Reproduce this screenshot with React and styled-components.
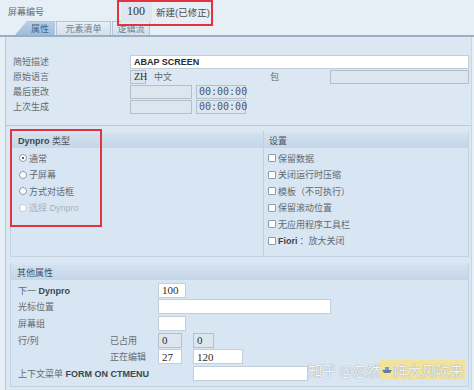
import React from 'react';
import styled, { createGlobalStyle, css } from 'styled-components';

const Global = createGlobalStyle`
  html, body { margin: 0; padding: 0; background: #e6eef6; }
  body { font-family: "Liberation Sans", "Noto Sans CJK SC", sans-serif; }
`;

const Screen = styled.div`
  position: relative;
  width: 474px;
  height: 390px;
  overflow: hidden;
  background: #e6eef6;
  font-size: 9px;
  color: #646a71;
`;

const TopBar = styled.div`
  display: flex;
  align-items: center;
  height: 20px;
  padding: 3px 0 0 8px;
  box-sizing: border-box;
`;

const TopLabel = styled.span`
  width: 113px;
`;

const Annotated = styled.div`
  position: relative;
  display: flex;
  align-items: center;
  gap: 4px;
  height: 20px;
`;

const RedFrame = styled.div`
  position: absolute;
  border: 2px solid #e0353d;
  pointer-events: none;
  ${({ $inset }) => css`inset: ${$inset};`}
`;

const NumberField = styled.div`
  width: 31px;
  height: 20px;
  display: flex;
  align-items: center;
  padding-left: 6px;
  box-sizing: border-box;
  background: #dfe6ee;
  font-family: "Liberation Serif", "Noto Sans CJK SC", serif;
  font-size: 12px;
  color: #333;
`;

const Status = styled.span`
  font-size: 9.5px;
  color: #4c4c4c;
`;

const TabStrip = styled.div`
  display: flex;
  align-items: flex-end;
  height: 15px;
  padding-left: 15px;
  border-bottom: 2px solid #98afc6;
`;

const Tab = styled.div`
  height: 14px;
  display: flex;
  align-items: center;
  justify-content: center;
  box-sizing: border-box;
  width: ${({ $w }) => $w}px;
  margin-right: 1px;
  color: ${({ $active }) => ($active ? '#46668a' : '#6b7d90')};
  background: ${({ $active }) => ($active ? 'linear-gradient(#b8cfe6, #9fbcdb)' : 'linear-gradient(#e6eef6, #d3e0ec)')};
  border: 1px solid #b4c5d6;
  border-bottom: none;
  ${({ $first }) => $first && css`
    clip-path: polygon(12px 0, 100% 0, 100% 100%, 0 100%);
    padding-left: 10px;
  `}
`;

const Body = styled.div`
  margin-left: 5px;
  margin-right: 2px;
  height: 353px;
  background: #dbe7f3;
  border-left: 1px solid #b7c7d7;
  border-right: 1px solid #c9d6e3;
  display: flex;
  flex-direction: column;
`;

const TopGroup = styled.div`
  height: 89px;
  box-sizing: border-box;
  padding: 17px 2px 0 7px;
  border-bottom: 1px solid #b9c9da;
`;

const Row = styled.div`
  display: flex;
  align-items: center;
  height: ${({ $h }) => $h || 15}px;
`;

const Label = styled.span`
  flex: none;
  width: ${({ $w }) => $w}px;
  white-space: nowrap;
  color: ${({ $muted }) => ($muted ? '#a9b3bd' : '#646a71')};
`;

const Latin = styled.span`
  font-weight: bold;
  color: #3d4650;
`;

const Field = styled.div`
  flex: ${({ $grow }) => ($grow ? '1' : 'none')};
  width: ${({ $w }) => ($w ? `${$w}px` : 'auto')};
  height: ${({ $h }) => $h || 14}px;
  margin-left: ${({ $ml }) => $ml || 0}px;
  box-sizing: border-box;
  display: flex;
  align-items: center;
  padding-left: 3px;
  background: ${({ $off }) => ($off ? '#dde6ef' : '#ffffff')};
  border: 1px solid ${({ $off }) => ($off ? '#b2bfcc' : '#c3ced9')};
  font-family: ${({ $serif }) => ($serif ? '"Liberation Serif", serif' : '"Liberation Sans", sans-serif')};
  font-size: ${({ $fs }) => $fs || 9}px;
  color: #2d2d2d;
  font-weight: ${({ $bold }) => ($bold ? 'bold' : 'normal')};
`;

const Time = styled(Field)`
  font-family: "DejaVu Sans Mono", "Liberation Mono", monospace;
  font-size: 10px;
  color: #4a5866;
  padding-left: 2px;
`;

const Plain = styled.span`
  margin-left: ${({ $ml }) => $ml || 0}px;
  width: ${({ $w }) => ($w ? `${$w}px` : 'auto')};
  flex: none;
`;

const Group = styled.div`
  margin: ${({ $mt }) => $mt}px 2px 0 4px;
  height: ${({ $h }) => $h}px;
  box-sizing: border-box;
  border: 1px solid #c3d2e1;
  border-top: none;
  background: #d8e5f2;
  display: flex;
  flex-direction: column;
`;

const Columns = styled.div`
  display: grid;
  grid-template-columns: 252px 1fr;
  flex: 1;
`;

const Column = styled.div`
  display: flex;
  flex-direction: column;
  border-left: ${({ $divider }) => ($divider ? '1px solid #c1d0df' : 'none')};
`;

const GroupHeader = styled.div`
  height: 15px;
  margin-top: 2px;
  display: flex;
  align-items: center;
  padding-left: ${({ $pl }) => $pl || 7}px;
  background: linear-gradient(#d3e1ef, #c4d6e9);
  color: #4b5360;
`;

const OptionList = styled.div`
  position: relative;
  display: flex;
  flex-direction: column;
  padding: 2px 0 0 ${({ $pl }) => $pl}px;
`;

const Option = styled.div`
  display: flex;
  align-items: center;
  gap: 2px;
  height: 16.5px;
  color: ${({ $disabled }) => ($disabled ? '#aab4be' : '#646a71')};
`;

const Radio = styled.span`
  position: relative;
  width: 8px;
  height: 8px;
  border-radius: 50%;
  background: #fff;
  border: 1px solid ${({ $disabled }) => ($disabled ? '#c6cfd8' : '#8d9aa7')};
  box-sizing: border-box;
  &::after {
    content: '';
    position: absolute;
    left: 2px;
    top: 2px;
    width: 2px;
    height: 2px;
    border-radius: 50%;
    background: ${({ $on }) => ($on ? '#2a2a2a' : 'transparent')};
  }
`;

const Check = styled.span`
  width: 8px;
  height: 8px;
  box-sizing: border-box;
  background: #fff;
  border: 1px solid #8e9aa6;
  border-radius: 1px;
`;

const OtherRows = styled.div`
  display: flex;
  flex-direction: column;
  padding: 2px 0 0 7px;
`;

const Watermark = styled.div`
  position: absolute;
  left: 308px;
  top: 360px;
  display: flex;
  align-items: center;
  font-family: "Noto Sans CJK SC", sans-serif;
  font-size: 14px;
  color: rgba(255, 255, 255, 0.92);
  text-shadow: 0 0 1px #9aa6b2, 0 0 1px #9aa6b2;
  white-space: nowrap;
`;

const Highlight = styled.span`
  display: inline-flex;
  align-items: center;
  background: #f3e39a;
  padding: 0 2px 0 1px;
  color: rgba(255, 255, 255, 0.85);
`;

const dynproOptions = [
  { text: '通常', on: true },
  { text: '子屏幕' },
  { text: '方式对话框' },
  { text: '选择 Dynpro', disabled: true },
];

const settings = ['保留数据', '关闭运行时压缩', '模板（不可执行）', '保留滚动位置', '无应用程序工具栏'];

export default function App() {
  return (
    <Screen>
      <Global />
      <TopBar>
        <TopLabel>屏幕编号</TopLabel>
        <Annotated>
          <NumberField>100</NumberField>
          <Status>新建(已修正)</Status>
          <RedFrame $inset="-2px -3px -4px -4px" />
        </Annotated>
      </TopBar>
      <TabStrip>
        <Tab $first $active $w={40}>属性</Tab>
        <Tab $w={55}>元素清单</Tab>
        <Tab $w={38}>逻辑流</Tab>
      </TabStrip>
      <Body>
        <TopGroup>
          <Row>
            <Label $w={117}>简短描述</Label>
            <Field $grow $fs={9} $bold>ABAP SCREEN</Field>
          </Row>
          <Row>
            <Label $w={117}>原始语言</Label>
            <Field $w={16} $off $serif $fs={10}>ZH</Field>
            <Plain $ml={8} $w={116}>中文</Plain>
            <Plain $w={60}>包</Plain>
            <Field $grow $off />
          </Row>
          <Row>
            <Label $w={117}>最后更改</Label>
            <Field $w={62} $off />
            <Time $w={50} $ml={4} $off>00:00:00</Time>
          </Row>
          <Row>
            <Label $w={117}>上次生成</Label>
            <Field $w={62} $off />
            <Time $w={50} $ml={4} $off>00:00:00</Time>
          </Row>
        </TopGroup>

        <Group $mt={5} $h={126}>
          <Columns>
            <Column>
              <GroupHeader $pl={7}><Latin>Dynpro</Latin>&nbsp;类型</GroupHeader>
              <OptionList $pl={8}>
                {dynproOptions.map((o) => (
                  <Option key={o.text} $disabled={o.disabled}>
                    <Radio $on={o.on} $disabled={o.disabled} />
                    {o.text}
                  </Option>
                ))}
                <RedFrame $inset="-19px auto auto -1px" style={{ width: '88px', height: '94px' }} />
              </OptionList>
            </Column>
            <Column $divider>
              <GroupHeader $pl={5}>设置</GroupHeader>
              <OptionList $pl={4}>
                {settings.map((s) => (
                  <Option key={s}>
                    <Check />
                    {s}
                  </Option>
                ))}
                <Option>
                  <Check />
                  <Latin>Fiori</Latin>：放大关闭
                </Option>
              </OptionList>
            </Column>
          </Columns>
        </Group>

        <Group $mt={6} $h={124}>
          <GroupHeader $pl={6}>其他属性</GroupHeader>
          <OtherRows>
            <Row $h={16.6}>
              <Label $w={140}>下一 <Latin>Dynpro</Latin></Label>
              <Field $w={28} $h={15} $serif $fs={11}>100</Field>
            </Row>
            <Row $h={16.6}>
              <Label $w={140}>光标位置</Label>
              <Field $w={173} $h={15} />
            </Row>
            <Row $h={16.6}>
              <Label $w={140}>屏幕组</Label>
              <Field $w={28} $h={15} />
            </Row>
            <Row $h={16.6}>
              <Label $w={92}>行/列</Label>
              <Label $w={48}>已占用</Label>
              <Field $w={24} $h={15} $off $serif $fs={11}>0</Field>
              <Field $w={21} $h={15} $ml={11} $off $serif $fs={11}>0</Field>
            </Row>
            <Row $h={16.6}>
              <Label $w={92} />
              <Label $w={48}>正在编辑</Label>
              <Field $w={24} $h={15} $serif $fs={11}>27</Field>
              <Field $w={50} $h={15} $ml={11} $serif $fs={11}>120</Field>
            </Row>
            <Row $h={16.6}>
              <Label $w={175}>上下文菜单 <Latin>FORM ON CTMENU</Latin></Label>
              <Field $w={115} $h={15} />
            </Row>
          </OtherRows>
        </Group>
      </Body>
      <Watermark>
        知乎 @忽然
        <Highlight>
          <svg width="12" height="10" viewBox="0 0 12 10">
            <path d="M1 5h10l-2 3H3z" fill="#5f7fa8" />
            <rect x="4" y="2" width="4" height="3" fill="#7f9cc0" />
          </svg>
          阵大风吹来
        </Highlight>
      </Watermark>
    </Screen>
  );
}
